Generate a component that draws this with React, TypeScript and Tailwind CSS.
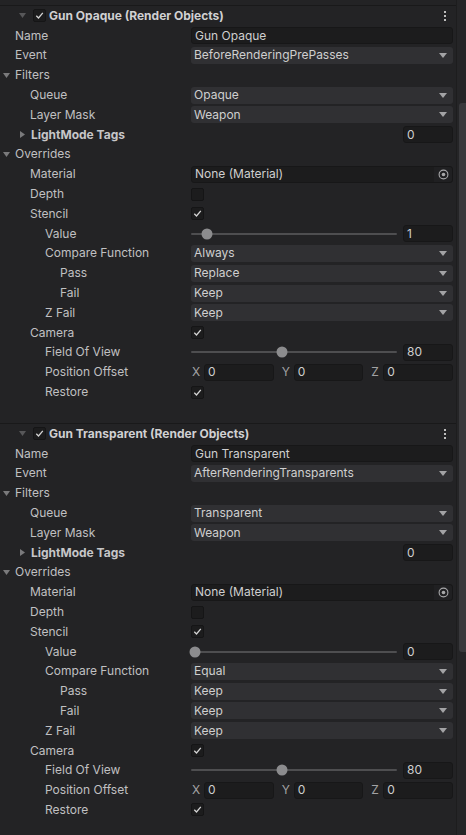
import React from "react";

type Indent = 0 | 1 | 2 | 3;

const indentClass = ["pl-[15px]", "pl-[30px]", "pl-[45px]", "pl-[60px]"];

function Caret({ open, className }: { open: boolean; className?: string }) {
  return (
    <svg width="7" height="7" viewBox="0 0 7 7" className={className}>
      {open ? (
        <polygon points="0,1 7,1 3.5,6" fill="#7a7a7c" />
      ) : (
        <polygon points="1,0 6,3.5 1,7" fill="#7a7a7c" />
      )}
    </svg>
  );
}

function Check({ on }: { on: boolean }) {
  return (
    <div className="flex h-[13px] w-[13px] items-center justify-center rounded-[2px] border border-[#151516] bg-[#1c1c1d]">
      {on && (
        <svg width="9" height="9" viewBox="0 0 9 9">
          <path d="M1.3 4.8 L3.5 7 L7.8 1.8" stroke="#d4d4d4" strokeWidth="1.3" fill="none" />
        </svg>
      )}
    </div>
  );
}

function TextField({ value, className = "flex-1" }: { value: string; className?: string }) {
  return (
    <div className={`flex h-[17px] items-center rounded-[3px] border border-[#171718] bg-[#1c1c1d] pl-[3px] text-[#cfcfcf] ${className}`}>
      {value}
    </div>
  );
}

function Dropdown({ value }: { value: string }) {
  return (
    <div className="flex h-[17px] flex-1 items-center justify-between rounded-[3px] bg-[#303033] pl-[3px] pr-[6px] text-[#cfcfcf]">
      <span>{value}</span>
      <svg width="8" height="5" viewBox="0 0 8 5">
        <polygon points="0,0 8,0 4,5" fill="#a3a3a5" />
      </svg>
    </div>
  );
}

function ObjectField({ value }: { value: string }) {
  return (
    <div className="flex h-[17px] flex-1 items-center justify-between rounded-[3px] border border-[#171718] bg-[#1c1c1d] pl-[3px] text-[#cfcfcf]">
      <span>{value}</span>
      <div className="flex h-full w-[18px] items-center justify-center rounded-r-[3px] bg-[#202022]">
        <svg width="11" height="11" viewBox="0 0 11 11">
          <circle cx="5.5" cy="5.5" r="4.4" stroke="#a8a8aa" strokeWidth="1.1" fill="none" />
          <circle cx="5.5" cy="5.5" r="1.8" fill="#a8a8aa" />
        </svg>
      </div>
    </div>
  );
}

function Slider({ pct, value }: { pct: number; value: string }) {
  return (
    <div className="flex flex-1 items-center gap-[6px]">
      <div className="relative flex h-[17px] flex-1 items-center">
        <div className="h-[2px] w-full rounded-full bg-[#4e4e50]" />
        <div
          className="absolute top-1/2 h-[11px] w-[11px] -translate-x-1/2 -translate-y-1/2 rounded-full bg-[#8c8c8e]"
          style={{ left: `${pct}%` }}
        />
      </div>
      <TextField value={value} className="w-[50px] shrink-0" />
    </div>
  );
}

function Vector3() {
  return (
    <div className="flex flex-1 gap-[7px]">
      {["X", "Y", "Z"].map((axis) => (
        <div key={axis} className="flex flex-1 items-center">
          <span className="w-[13px] shrink-0 pl-[1px] text-[#a2a2a4]">{axis}</span>
          <TextField value="0" />
        </div>
      ))}
    </div>
  );
}

function Row({
  label,
  indent = 0,
  children,
}: {
  label: string;
  indent?: Indent;
  children?: React.ReactNode;
}) {
  return (
    <div className="flex h-[19.8px] items-center">
      <div className={`w-[191px] shrink-0 text-[#c0c0c2] ${indentClass[indent]}`}>{label}</div>
      <div className="flex flex-1 items-center pr-[3px]">{children}</div>
    </div>
  );
}

function Foldout({ label, sub }: { label: string; sub?: boolean }) {
  if (sub) {
    return (
      <div className="flex h-[19.8px] items-center">
        <div className="flex w-[191px] shrink-0 items-center pl-[19px]">
          <Caret open={false} className="mr-[5px]" />
          <span className="font-bold text-[#c6c6c8]">{label}</span>
        </div>
        <div className="flex flex-1 items-center justify-end pr-[3px]">
          <TextField value="0" className="w-[50px]" />
        </div>
      </div>
    );
  }
  return (
    <div className="flex h-[19.8px] items-center pl-[3px] text-[#c0c0c2]">
      <Caret open className="mr-[5px]" />
      <span>{label}</span>
    </div>
  );
}

type PassData = {
  title: string;
  name: string;
  event: string;
  queue: string;
  compare: string;
  pass: string;
  stencil: number;
  stencilPct: number;
};

function RenderObjectsPass({ d }: { d: PassData }) {
  return (
    <section className="border-t border-[#19191a] pb-[21px]">
      <div className="flex h-[19.8px] items-center pr-[10px]">
        <div className="flex flex-1 items-center pl-[19px]">
          <Caret open className="mr-[7px] opacity-60" />
          <Check on />
          <span className="ml-[3px] font-bold text-[#d0d0d2]">{d.title}</span>
        </div>
        <div className="flex flex-col gap-[2px]">
          <span className="h-[2px] w-[2px] bg-[#bdbdbd]" />
          <span className="h-[2px] w-[2px] bg-[#bdbdbd]" />
          <span className="h-[2px] w-[2px] bg-[#bdbdbd]" />
        </div>
      </div>
      <Row label="Name">
        <TextField value={d.name} />
      </Row>
      <Row label="Event">
        <Dropdown value={d.event} />
      </Row>
      <Foldout label="Filters" />
      <Row label="Queue" indent={1}>
        <Dropdown value={d.queue} />
      </Row>
      <Row label="Layer Mask" indent={1}>
        <Dropdown value="Weapon" />
      </Row>
      <Foldout label="LightMode Tags" sub />
      <Foldout label="Overrides" />
      <Row label="Material" indent={1}>
        <ObjectField value="None (Material)" />
      </Row>
      <Row label="Depth" indent={1}>
        <Check on={false} />
      </Row>
      <Row label="Stencil" indent={1}>
        <Check on />
      </Row>
      <Row label="Value" indent={2}>
        <Slider pct={d.stencilPct} value={String(d.stencil)} />
      </Row>
      <Row label="Compare Function" indent={2}>
        <Dropdown value={d.compare} />
      </Row>
      <Row label="Pass" indent={3}>
        <Dropdown value={d.pass} />
      </Row>
      <Row label="Fail" indent={3}>
        <Dropdown value="Keep" />
      </Row>
      <Row label="Z Fail" indent={2}>
        <Dropdown value="Keep" />
      </Row>
      <Row label="Camera" indent={1}>
        <Check on />
      </Row>
      <Row label="Field Of View" indent={2}>
        <Slider pct={44} value="80" />
      </Row>
      <Row label="Position Offset" indent={2}>
        <Vector3 />
      </Row>
      <Row label="Restore" indent={2}>
        <Check on />
      </Row>
    </section>
  );
}

const passes: PassData[] = [
  {
    title: "Gun Opaque (Render Objects)",
    name: "Gun Opaque",
    event: "BeforeRenderingPrePasses",
    queue: "Opaque",
    compare: "Always",
    pass: "Replace",
    stencil: 1,
    stencilPct: 8,
  },
  {
    title: "Gun Transparent (Render Objects)",
    name: "Gun Transparent",
    event: "AfterRenderingTransparents",
    queue: "Transparent",
    compare: "Equal",
    pass: "Keep",
    stencil: 0,
    stencilPct: 2,
  },
];

export default function App() {
  return (
    <div className="flex h-[835px] w-[466px] overflow-hidden bg-[#232325] font-['Inter',sans-serif] text-[12px] leading-none">
      <div className="flex-1">
        <div className="h-[5px]" />
        {passes.map((p) => (
          <RenderObjectsPass key={p.title} d={p} />
        ))}
      </div>
      <div className="w-[10px] shrink-0 border-l border-[#1d1d1e] bg-[#252527] pl-[2px]">
        <div className="mt-[103px] h-[549px] rounded-l-[3px] bg-[#39393c]" />
      </div>
    </div>
  );
}
